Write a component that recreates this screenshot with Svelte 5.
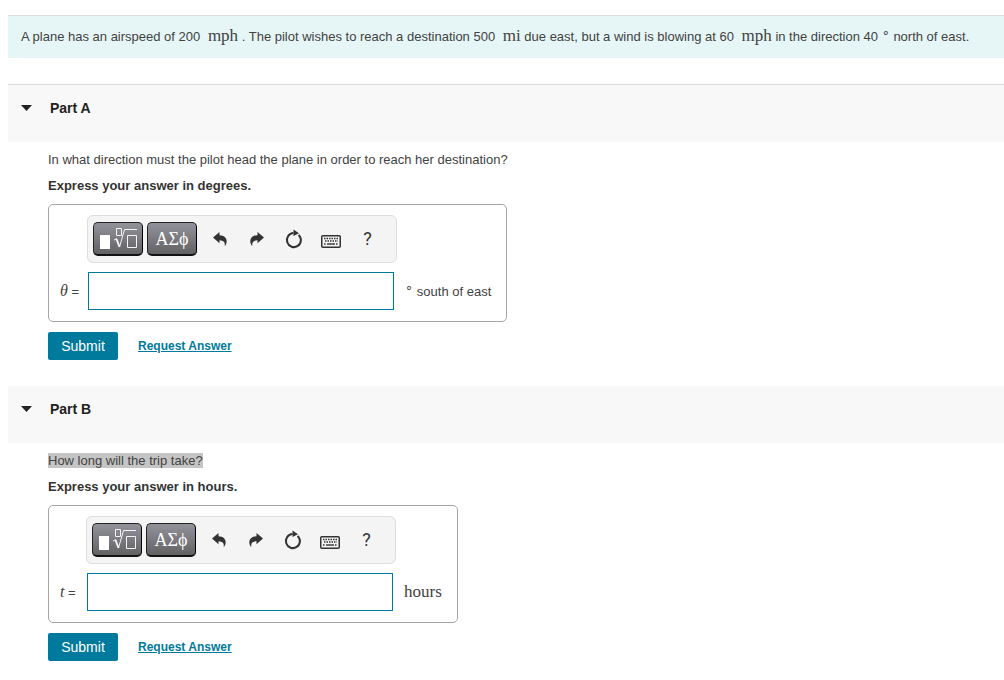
<script>
  const parts = [
    {
      id: 'a',
      title: 'Part A',
      question: 'In what direction must the pilot head the plane in order to reach her destination?',
      instruction: 'Express your answer in degrees.',
      symbol: 'θ',
      unit: 'south of east',
      degrees: true,
      selected: false,
    },
    {
      id: 'b',
      title: 'Part B',
      question: 'How long will the trip take?',
      instruction: 'Express your answer in hours.',
      symbol: 't',
      unit: 'hours',
      degrees: false,
      selected: true,
    },
  ];

  let answers = $state({ a: '', b: '' });
  let open = $state({ a: true, b: true });

  function submit(e) {
    e.preventDefault();
  }
</script>

<main>
  <p class="intro">
    A plane has an airspeed of 200 <span class="math unit">mph</span> . The pilot wishes to reach a
    destination 500 <span class="math unit">mi</span> due east, but a wind is blowing at 60
    <span class="math unit">mph</span> in the direction 40 <span class="degree">∘</span> north of east.
  </p>

  {#each parts as part (part.id)}
    <section class="part">
      <h2 class="part-header">
        <button
          class="part-toggle"
          aria-expanded={open[part.id]}
          onclick={() => (open[part.id] = !open[part.id])}
        >
          <svg class="caret" width="11" height="6" viewBox="0 0 11 6"><path d="M0 0h11L5.5 6z" /></svg>
          {part.title}
        </button>
      </h2>

      {#if open[part.id]}
        <form class="part-body" onsubmit={submit}>
          <p class="question"><span class:selected={part.selected}>{part.question}</span></p>
          <p class="instruction">{part.instruction}</p>

          <div class="answer-box">
            <div class="toolbar" role="toolbar" aria-label="Equation tools">
              <button type="button" class="palette" aria-label="Templates">
                <svg width="40" height="22" viewBox="0 0 40 22">
                  <path class="solid" d="M2 7h10v14H2z" />
                  <path class="line" d="M18.5 0.5h5v7h-5zM16 12l3-1.500M21.500 19L26.500 1.500H39M29.500 7.500h9v12h-9z" />
                  <path class="heavy" d="M18.500 11l3 8" />
                </svg>
              </button>
              <button type="button" class="palette greek" aria-label="Symbols">ΑΣϕ</button>
              <button type="button" class="tool" aria-label="Undo">
                <svg width="16" height="16" viewBox="0 0 16 16">
                  <path d="M1 6.500L7.500 1v3.200c4.500.2 7.200 2.600 7.200 6.200 0 1.900-.8 3.500-2 4.600.6-3.600-1-5.600-5.200-5.700v3z" />
                </svg>
              </button>
              <button type="button" class="tool" aria-label="Redo">
                <svg width="16" height="16" viewBox="0 0 16 16">
                  <path d="M15 6.500L8.500 1v3.200C4 4.400 1.300 6.800 1.300 10.400c0 1.900.8 3.500 2 4.600-.6-3.600 1-5.600 5.200-5.700v3z" />
                </svg>
              </button>
              <button type="button" class="tool" aria-label="Reset">
                <svg width="18" height="20" viewBox="0 0 18 20">
                  <path class="ring" d="M13.600 5.900A7 7 0 1 1 8.500 4.100" />
                  <path d="M8.500 0.500L14 4.200 8.500 7z" />
                </svg>
              </button>
              <button type="button" class="tool keyboard" aria-label="Keyboard shortcuts">
                <svg width="20" height="13" viewBox="0 0 20 13">
                  <rect class="case" x="0.75" y="0.75" width="18.5" height="11.5" rx="1" />
                  <path class="keys" d="M3 3.500h14M4 6h13M3 9h2M15 9h2" />
                  <path d="M6 8.300h8v1.400H6z" />
                </svg>
              </button>
              <button type="button" class="tool help" aria-label="Help">?</button>
            </div>

            <label class="symbol" for="answer-{part.id}"><i class="math">{part.symbol}</i> =</label>
            <input id="answer-{part.id}" type="text" autocomplete="off" bind:value={answers[part.id]} />
            {#if part.degrees}
              <span class="suffix"><span class="degree">∘</span> {part.unit}</span>
            {:else}
              <span class="suffix math">{part.unit}</span>
            {/if}
          </div>

          <div class="actions">
            <button type="submit" class="submit">Submit</button>
            <a href="#request-{part.id}">Request Answer</a>
          </div>
        </form>
      {/if}
    </section>
  {/each}
</main>

<style>
  :global(body) {
    background: #fff;
  }

  main {
    padding: 15px 0 0 8px;
    font: 13px/20px "Liberation Sans", Arial, sans-serif;
    color: #424242;
  }

  p {
    margin: 0;
  }

  button {
    font: inherit;
    color: inherit;
    cursor: pointer;
  }

  .math {
    font: 17px/20px "Liberation Serif", "Times New Roman", serif;
  }

  i.math {
    font-size: 16px;
    font-style: italic;
  }

  .degree {
    font: 13px/13px "DejaVu Sans", sans-serif;
    vertical-align: 4px;
  }

  .intro {
    margin-bottom: 26px;
    padding: 10px 13px 11px;
    border-top: 1px solid #dcdede;
    background: #e6f6f6;
  }

  .intro .unit {
    margin-left: 4px;
  }

  .part {
    margin-bottom: 26px;
  }

  .part:last-child {
    margin-bottom: 0;
  }

  .part-header {
    margin: 0;
    padding: 13px 13px 24px;
    background: #f8f8f8;
    font-size: 14px;
    line-height: 20px;
  }

  .intro + .part .part-header {
    border-top: 1px solid #dcdcdc;
  }

  .part-toggle {
    display: flex;
    align-items: center;
    gap: 18px;
    padding: 0;
    border: none;
    background: none;
    color: #222;
  }

  .caret {
    fill: #222;
  }

  .part-body {
    padding: 8px 40px 0;
  }

  .selected {
    background: #c5c5c5;
  }

  .instruction {
    margin: 6px 0 8px;
    font-weight: bold;
    color: #333;
  }

  .answer-box {
    display: inline-grid;
    grid-template-columns: auto 310px auto;
    gap: 9px 8px;
    align-items: center;
    padding: 10px 15px 11px 11px;
    border: 1px solid #a5a5a5;
    border-radius: 5px;
    vertical-align: top;
  }

  .toolbar {
    grid-column: 2;
    display: flex;
    align-items: center;
    height: 48px;
    padding: 0 5px;
    border: 1px solid #ddd;
    border-radius: 6px;
    background: #f4f4f4;
    box-sizing: border-box;
  }

  .palette {
    display: flex;
    align-items: center;
    justify-content: center;
    width: 50px;
    height: 34px;
    margin-right: 4px;
    padding: 0;
    border: 1px solid #222;
    border-right-color: #000;
    border-bottom: 2px solid #111;
    border-radius: 5px;
    background: linear-gradient(#92929a, #626264);
    color: #fff;
  }

  .palette .solid {
    fill: #fff;
  }

  .palette .line,
  .palette .heavy {
    fill: none;
    stroke: #f4f4f4;
  }

  .palette .heavy {
    stroke-width: 2;
  }

  .greek {
    font: 18px/20px "Liberation Serif", "Times New Roman", serif;
  }

  .tool {
    display: flex;
    align-items: center;
    justify-content: center;
    width: 37px;
    height: 34px;
    padding: 0;
    border: none;
    background: none;
    color: #333;
  }

  .tool svg {
    fill: #333;
  }

  .tool .ring,
  .tool .case,
  .tool .keys {
    fill: none;
    stroke: #333;
    stroke-width: 2;
  }

  .tool .case {
    stroke-width: 1.5;
  }

  .tool .keys {
    stroke-width: 1.5;
    stroke-dasharray: 1.5 1;
  }

  .keyboard {
    padding-top: 4px;
  }

  .help {
    font: 18px/20px Roboto, sans-serif;
  }

  .symbol {
    grid-column: 1;
    min-width: 18px;
    white-space: nowrap;
  }

  input {
    justify-self: start;
    width: 306px;
    height: 38px;
    margin-left: 1px;
    padding: 0 8px;
    border: 1px solid #007a9c;
    background: #fff;
    font: inherit;
    color: inherit;
    box-sizing: border-box;
    outline: none;
  }

  .suffix {
    white-space: nowrap;
  }

  .actions {
    display: flex;
    align-items: center;
    gap: 20px;
    margin-top: 10px;
  }

  .submit {
    width: 70px;
    height: 28px;
    padding: 0;
    border: none;
    border-radius: 2px;
    background: #007a9c;
    font-size: 14px;
    color: #fff;
  }

  .actions a {
    font-size: 12px;
    font-weight: bold;
    color: #007a9c;
  }
</style>
